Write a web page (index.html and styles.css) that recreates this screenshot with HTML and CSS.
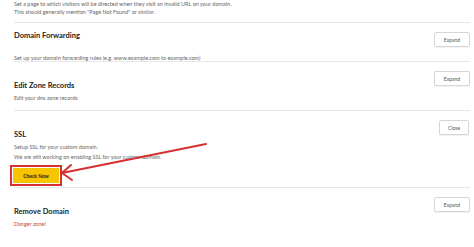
FILE: index.html
```html
<!DOCTYPE html>
<html lang="en">
<head>
<meta charset="UTF-8" />
<title>Domain Settings</title>
<link rel="stylesheet" href="styles.css">
</head>
<body>

<div class="page">

  <div class="intro">
    <p class="desc">Set a page to which visitors will be directed when they visit an invalid URL on your domain.</p>
    <p class="desc">This should generally mention "Page Not Found" or similar.</p>
  </div>

  <div class="section section-forward">
    <div class="head">
      <h3 class="title">Domain Forwarding</h3>
      <button type="button" class="btn">Expand</button>
    </div>
    <p class="desc">Set up your domain forwarding rules (e.g. www.example.com to example.com)</p>
  </div>

  <div class="section">
    <div class="head">
      <h3 class="title">Edit Zone Records</h3>
      <button type="button" class="btn">Expand</button>
    </div>
    <p class="desc">Edit your dns zone records</p>
  </div>

  <div class="section section-ssl">
    <div class="head">
      <h3 class="title">SSL</h3>
      <button type="button" class="btn btn-close">Close</button>
    </div>
    <p class="desc">Setup SSL for your custom domain.</p>
    <p class="desc desc-second">We are still working on enabling SSL for your custom domain.</p>
    <button type="button" class="btn-check">Check Now</button>
  </div>

  <div class="section">
    <div class="head">
      <h3 class="title">Remove Domain</h3>
      <button type="button" class="btn">Expand</button>
    </div>
    <p class="desc danger">Danger zone!</p>
  </div>

</div>

<!-- annotation arrow -->
<svg class="arrow" width="474" height="247" viewBox="0 0 474 247">
  <g stroke="#d63031" stroke-width="2" stroke-linecap="round" fill="none">
    <line x1="206" y1="144" x2="62" y2="173" />
    <polyline points="71,165 62,173 72,180" />
  </g>
</svg>

</body>
</html>
```

FILE: styles.css
```css
body {
  margin: 0;
  font-family: Lato, "Open Sans", sans-serif;
  background-color: #fff;
  color: #222;
}
.page {
  padding: 0 4px 0 14px;
}
p {
  margin: 0;
}
.desc {
  font-size: 5.5px;
  line-height: 7px;
  color: #666;
}
.intro {
  padding-top: 1px;
  height: 22px;
  box-sizing: border-box;
}
.intro .desc {
  line-height: 7.5px;
}
.section {
  border-top: 1px solid #e8e8e8;
  padding-top: 9px;
  padding-bottom: 8px;
}
.head {
  display: flex;
  justify-content: space-between;
  align-items: flex-start;
  height: 18px;
}
.title {
  margin: 11px 0 0;
  font-size: 7.5px;
  line-height: 8px;
  font-weight: 700;
  color: #222;
}
.section .desc {
  margin-top: 6px;
}
.section-forward {
  padding-bottom: 0;
}
.section-forward .title {
  margin-top: 0;
}
.section-forward .desc {
  line-height: 5px;
}
.btn {
  width: 36px;
  height: 15px;
  padding: 0;
  border: 1px solid #d6d6d6;
  border-radius: 2px;
  background-color: #fff;
  box-shadow: 0 1px 1px rgba(0, 0, 0, 0.06);
  font-family: inherit;
  font-size: 5px;
  color: #555;
}
.btn-close {
  width: 30px;
  margin-right: 1px;
}
.section-ssl {
  padding-bottom: 4px;
}
.section-ssl .desc-second {
  margin-top: 3px;
}
.btn-check {
  display: block;
  margin: 7px 0 0 -1px;
  width: 46px;
  height: 15px;
  padding: 0;
  border: none;
  background-color: #f6c500;
  outline: 2px solid #d63031;
  outline-offset: 1px;
  font-family: inherit;
  font-size: 5px;
  font-weight: 700;
  color: #222;
}
.danger {
  color: #c9453b;
}
.arrow {
  position: absolute;
  top: 0;
  left: 0;
  pointer-events: none;
}
```
